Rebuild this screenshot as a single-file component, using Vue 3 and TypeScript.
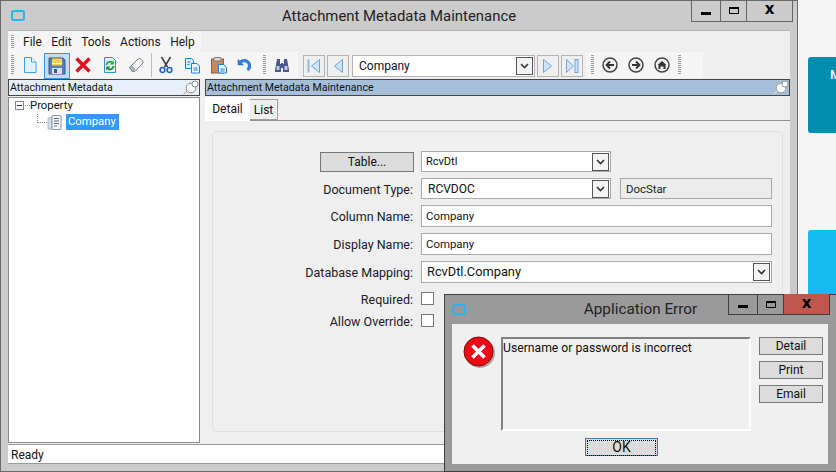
<script setup lang="ts">
const menus = ['File', 'Edit', 'Tools', 'Actions', 'Help']
</script>

<template>
  <div class="screen">
    <main class="window">
      <header class="titlebar">
        <span class="app-icon"></span>
        <span class="titlebar__text">Attachment Metadata Maintenance</span>
        <div class="caption">
          <button class="caption__btn caption__btn--min"><i></i></button>
          <button class="caption__btn caption__btn--max"><i></i></button>
          <button class="caption__btn caption__btn--close">x</button>
        </div>
      </header>

      <div class="client">
        <nav class="menu">
          <span class="grip grip--menu"></span>
          <span v-for="m in menus" :key="m" class="menu__item">{{ m }}</span>
        </nav>

        <div class="toolbar">
          <div class="strip strip--main">
            <span class="grip"></span>
            <span class="tool">
              <svg width="16" height="18" viewBox="0 0 16 18"><path d="M2.500 1.500h7l4.500 4.500v10.500h-11.500z" fill="#e3f2ff" stroke="#3f9fe8" /><path d="M9.500 1.500v4.500h4.500" fill="#fff" stroke="#3f9fe8" /></svg>
            </span>
            <span class="tool tool--active">
              <svg width="18" height="18" viewBox="0 0 18 18"><path d="M1 1h14l2 2v14h-16z" fill="#5a7fc0" stroke="#3a5590" /><rect x="4" y="1.500" width="10" height="7" fill="#f5cf55" /><rect x="4" y="6" width="10" height="1" fill="#fff" /><rect x="4" y="11" width="10" height="6" fill="#d9dfe8" /><rect x="6" y="12" width="3" height="4" fill="#3b5a94" /></svg>
            </span>
            <span class="tool">
              <svg width="18" height="18" viewBox="0 0 18 18"><path d="M2.500 2.500l13 13M15.500 2.500l-13 13" stroke="#e0101c" stroke-width="3.400" /></svg>
            </span>
            <span class="tool">
              <svg width="14" height="18" viewBox="0 0 14 18"><path d="M1.500 1.500h8l3 3v12h-11z" fill="#dff0fb" stroke="#2f8fd0" /><path d="M3.500 9a3.500 3.500 0 0 1 5.500-2.700" fill="none" stroke="#25a82e" stroke-width="1.800" /><path d="M10.800 4.500v4h-4z" fill="#25a82e" /><path d="M10.500 10a3.500 3.500 0 0 1-5.500 2.700" fill="none" stroke="#1c8c26" stroke-width="1.800" /><path d="M3.200 14.500v-4h4z" fill="#1c8c26" /></svg>
            </span>
            <span class="tool">
              <svg width="17" height="16" viewBox="0 0 17 16"><path d="M1.500 10.500l8.500-8.500a2 2 0 0 1 2.800 0l1.700 1.700a2 2 0 0 1 0 2.800l-7.500 7.800h-3z" fill="#f4f6f9" stroke="#777b83" /><path d="M1.500 10.500l3.300 3.800 2.200-2-3.300-3.800z" fill="#b4b9c2" stroke="#777b83" stroke-width=".6" /></svg>
            </span>
            <span class="sep"></span>
            <span class="tool">
              <svg width="14" height="18" viewBox="0 0 14 18"><path d="M2.500 1l6 10M11.500 1l-6 10" stroke="#3c3c3c" stroke-width="1.500" /><circle cx="3.500" cy="14" r="2.400" fill="none" stroke="#1f5fd0" stroke-width="1.500" /><circle cx="10.500" cy="14" r="2.400" fill="none" stroke="#1f5fd0" stroke-width="1.500" /></svg>
            </span>
            <span class="tool">
              <svg width="17" height="17" viewBox="0 0 17 17"><path d="M1.500 1.500h6l2 2v8h-8z" fill="#dcefff" stroke="#1c7fd6" /><path d="M7.500 6.500h5.500l2.500 2.500v7h-8z" fill="#eef7ff" stroke="#1c7fd6" /><path d="M3.500 5h3M3.500 7.500h2M9.500 11h4M9.500 13h4" stroke="#1c7fd6" /></svg>
            </span>
            <span class="tool">
              <svg width="18" height="18" viewBox="0 0 18 18"><rect x="1.500" y="3" width="12" height="14" fill="#c58a5c" stroke="#8e5f3d" /><rect x="4" y="1.500" width="7" height="3.500" rx="1" fill="#d9d9d9" stroke="#777" /><path d="M8.500 8.500h5l3 3v5.500h-8z" fill="#eef7ff" stroke="#1c7fd6" /><path d="M10.500 13h4M10.500 15h4" stroke="#1c7fd6" /></svg>
            </span>
            <span class="tool">
              <svg width="16" height="14" viewBox="0 0 16 14"><path d="M1 1.500v5.500h5.500l-2-2a4 4 0 0 1 6.500 1.300c.6 1.700 0 3.500-1.300 4.700l1.800 1.800a6.500 6.500 0 0 0 1.800-7.500 6.400 6.400 0 0 0-10.400-2.200z" fill="#2f7fd8" stroke="#1d5fb0" stroke-width=".5" /></svg>
            </span>
            <span class="grip grip--mid"></span>
            <span class="tool">
              <svg width="16" height="16" viewBox="0 0 16 16"><path d="M3 2h3v5h1v-1h2v1h1v-5h3l2 11v2h-6v-4h-2v4h-6v-2z" fill="#4a568f" /><rect x="2.500" y="9" width="3" height="4" fill="#c0c8e6" /><rect x="10.500" y="9" width="3" height="4" fill="#c0c8e6" /></svg>
            </span>
          </div>

          <div class="nav">
            <span class="nav__btn"><svg width="14" height="16" viewBox="0 0 14 16"><path d="M1.500 1.500v13" stroke="#8fb8e6" stroke-width="2" /><path d="M12.500 1.500v13l-8-6.500z" fill="#cfe4fa" stroke="#6fa5dd" /></svg></span>
            <span class="nav__btn"><svg width="12" height="16" viewBox="0 0 12 16"><path d="M10.500 1.500v13l-8-6.500z" fill="#cfe4fa" stroke="#6fa5dd" /></svg></span>
            <div class="nav__combo">
              <span>Company</span>
              <span class="combo-arrow"><svg width="9" height="6" viewBox="0 0 9 6"><path d="M1 1l3.500 3.500 3.500-3.500" fill="none" stroke="#333" stroke-width="1.600" /></svg></span>
            </div>
            <span class="nav__btn"><svg width="12" height="16" viewBox="0 0 12 16"><path d="M1.500 1.500v13l8-6.500z" fill="#cfe4fa" stroke="#6fa5dd" /></svg></span>
            <span class="nav__btn"><svg width="14" height="16" viewBox="0 0 14 16"><path d="M1.500 1.500v13l7-6.500z" fill="#cfe4fa" stroke="#6fa5dd" /><rect x="10" y="1.500" width="3" height="13" fill="#cfe4fa" stroke="#6fa5dd" /></svg></span>
          </div>

          <div class="strip strip--go">
            <span class="grip"></span>
            <span class="go">
              <svg width="16" height="16" viewBox="0 0 16 16"><circle cx="8" cy="8" r="7" fill="#f2f2f2" stroke="#444" stroke-width="1.500" /><path d="M12 8h-7M8 4.500l-3.500 3.500 3.500 3.500" fill="none" stroke="#333" stroke-width="1.800" /></svg>
            </span>
            <span class="go">
              <svg width="16" height="16" viewBox="0 0 16 16"><circle cx="8" cy="8" r="7" fill="#f2f2f2" stroke="#444" stroke-width="1.500" /><path d="M4 8h7M8 4.500l3.500 3.500-3.500 3.500" fill="none" stroke="#333" stroke-width="1.800" /></svg>
            </span>
            <span class="go">
              <svg width="16" height="16" viewBox="0 0 16 16"><circle cx="8" cy="8" r="7" fill="#f2f2f2" stroke="#444" stroke-width="1.500" /><path d="M3.500 8l4.500-4 4.500 4h-1v4h-2v-2.500h-3v2.500h-2v-4z" fill="#333" /></svg>
            </span>
            <span class="grip grip--end"></span>
          </div>
        </div>

        <div class="workspace">
          <aside class="left">
            <div class="dock dock--light">
              <span>Attachment Metadata</span>
              <svg class="pin" width="16" height="15" viewBox="0 0 16 15"><path d="M.5 14.500l4-4" stroke="#999" /><circle cx="8" cy="8" r="4.800" fill="#fff" stroke="#8a8a8a" /><circle cx="12" cy="4" r="3" fill="#fff" stroke="#8a8a8a" /></svg>
            </div>
            <div class="tree">
              <div class="tree__root">
                <span class="tree__box"></span>
                <span class="tree__dots"></span>
                <span>Property</span>
              </div>
              <div class="tree__child">
                <span class="tree__line"></span>
                <svg width="16" height="15" viewBox="0 0 16 15"><path d="M1 3.500l4-2v12.500h-4z" fill="#d2dde6" stroke="#9aa8b5" stroke-width=".8" /><rect x="5" y=".5" width="9" height="14" rx="1" fill="#f4f7fa" stroke="#8b98a5" /><path d="M7 3.500h5M7 6h5M7 8.500h5M7 11h3" stroke="#5d6b78" /></svg>
                <span class="tree__selected">Company</span>
              </div>
            </div>
          </aside>

          <section class="right">
            <div class="dock dock--blue">
              <span>Attachment Metadata Maintenance</span>
              <svg class="pin" width="16" height="15" viewBox="0 0 16 15"><path d="M.5 14.500l4-4" stroke="#e4e4e4" /><circle cx="8" cy="8" r="4.800" fill="#fff" stroke="#9a9a9a" /><circle cx="12" cy="4" r="3" fill="#fff" stroke="#9a9a9a" /></svg>
            </div>

            <div class="tabs">
              <span class="tab tab--active">Detail</span>
              <span class="tab">List</span>
            </div>

            <div class="group">
              <div class="form">
                <button class="btn btn--table">Table...</button>
                <div class="combo combo--short combo--narrow"><span>RcvDtl</span><span class="combo-arrow"><svg width="9" height="6" viewBox="0 0 9 6"><path d="M1 1l3.500 3.500 3.500-3.500" fill="none" stroke="#333" stroke-width="1.600" /></svg></span></div>

                <label>Document Type:</label>
                <div class="pair">
                  <div class="combo combo--short"><span class="combo__pad">RCVDOC</span><span class="combo-arrow"><svg width="9" height="6" viewBox="0 0 9 6"><path d="M1 1l3.500 3.500 3.500-3.500" fill="none" stroke="#333" stroke-width="1.600" /></svg></span></div>
                  <div class="field field--readonly">DocStar</div>
                </div>

                <label>Column Name:</label>
                <div class="field">Company</div>

                <label>Display Name:</label>
                <div class="field">Company</div>

                <label>Database Mapping:</label>
                <div class="combo combo--wide"><span>RcvDtl.Company</span><span class="combo-arrow"><svg width="9" height="6" viewBox="0 0 9 6"><path d="M1 1l3.500 3.500 3.500-3.500" fill="none" stroke="#333" stroke-width="1.600" /></svg></span></div>

                <label class="label--check">Required:</label>
                <span class="check"></span>

                <label class="label--check">Allow Override:</label>
                <span class="check"></span>
              </div>
            </div>
          </section>
        </div>

        <footer class="status">Ready</footer>
      </div>
    </main>

    <aside class="behind">
      <div class="tile tile--teal">M</div>
      <div class="tile tile--cyan"></div>
    </aside>

    <!-- modal sits over everything, bottom right -->
    <div class="dialog">
      <header class="dialog__bar">
        <span class="app-icon app-icon--dim"></span>
        <span class="dialog__title">Application Error</span>
        <div class="caption caption--dialog">
          <button class="caption__btn caption__btn--min"><i></i></button>
          <button class="caption__btn caption__btn--max"><i></i></button>
          <button class="caption__btn caption__btn--close caption__btn--red">x</button>
        </div>
      </header>
      <div class="dialog__body">
        <svg class="dialog__icon" width="33" height="33" viewBox="0 0 33 33">
          <circle cx="17" cy="17" r="15" fill="#a8a8a8" />
          <circle cx="15.500" cy="15.500" r="14.500" fill="#ee0a14" stroke="#7a0a0c" />
          <path d="M9.500 9.500l12 12M21.500 9.500l-12 12" stroke="#fff" stroke-width="3.600" />
        </svg>
        <div class="dialog__message">Username or password is incorrect</div>
        <div class="dialog__actions">
          <button class="btn btn--side">Detail</button>
          <button class="btn btn--side">Print</button>
          <button class="btn btn--side">Email</button>
        </div>
        <button class="btn btn--ok"><span>OK</span></button>
      </div>
    </div>
  </div>
</template>

<style>
html,
body {
  margin: 0;
  background: #f5f5f5;
}
</style>

<style scoped>
.screen {
  position: relative;
  display: flex;
  width: 836px;
  height: 472px;
  overflow: hidden;
  background: #f5f5f5;
  color: #111;
  font-family: Roboto, 'Open Sans', sans-serif;
  font-size: 12px;
}

.window {
  flex: none;
  display: flex;
  flex-direction: column;
  box-sizing: border-box;
  width: 798px;
  height: 472px;
  border: 1px solid #6a6a6a;
  background: #cbcbcb;
}

.titlebar {
  position: relative;
  flex: none;
  display: flex;
  align-items: center;
  justify-content: center;
  height: 29px;
}

.titlebar__text {
  font-size: 14.900px;
  color: #222;
  margin-top: 1px;
}

.app-icon {
  position: absolute;
  left: 10px;
  top: 9px;
  box-sizing: border-box;
  width: 14px;
  height: 11px;
  border: 2.500px solid #25b7ec;
  border-radius: 3px;
  background: #c9c9c9;
}

.app-icon--dim {
  left: 7px;
  top: 9px;
  background: #999;
}

.caption {
  position: absolute;
  top: -1px;
  right: 4px;
  display: flex;
  height: 22px;
  border: 1px solid #666;
  border-top: 0;
  box-sizing: border-box;
}

.caption__btn {
  display: flex;
  align-items: center;
  justify-content: center;
  padding: 0 0 2px;
  border: 0;
  border-left: 1px solid #666;
  background: transparent;
  color: #000;
  font: 700 15px/1 'DejaVu Sans', sans-serif;
}

.caption__btn--min {
  width: 28px;
  border-left: 0;
  padding: 5px 0 0;
}

.caption__btn--min i {
  display: block;
  width: 10px;
  height: 3px;
  background: #000;
}

.caption__btn--max {
  width: 26px;
  padding: 0;
}

.caption__btn--max i {
  display: block;
  box-sizing: border-box;
  width: 10px;
  height: 7px;
  border: 1.500px solid #000;
  border-top-width: 2px;
}

.caption__btn--close {
  width: 46px;
}

.caption__btn--red {
  background: #c0574f;
}

.client {
  flex: 1;
  min-height: 0;
  display: flex;
  flex-direction: column;
  margin: 0 7px 7px;
  border-top: 1px solid #b2b2b2;
  background: #efefef;
}

.menu {
  flex: none;
  display: flex;
  align-items: center;
  width: 193px;
  height: 21px;
  background: #f5f5f5;
}

.menu__item {
  margin-right: 9.500px;
  color: #1a1a1a;
}

.grip {
  flex: none;
  width: 3px;
  height: 20px;
  margin: 0 3px;
  background: repeating-linear-gradient(#9a9a9a 0 1px, transparent 1px 2px);
}

.grip--menu {
  height: 13px;
  margin-right: 9px;
}

.grip--mid {
  margin: 0 3px 0 4px;
}

.grip--end {
  margin-left: 16px;
}

.toolbar {
  flex: none;
  display: flex;
  height: 27px;
}

.strip {
  display: flex;
  align-items: center;
  height: 26px;
  background: #f5f5f5;
}

.strip--main {
  width: 290px;
}

.strip--go {
  width: 117px;
  margin-left: 3px;
  padding-left: 2px;
  box-sizing: border-box;
}

.tool {
  flex: none;
  display: flex;
  align-items: center;
  justify-content: center;
  box-sizing: border-box;
  width: 26.500px;
  height: 26px;
}

.tool--active {
  margin-top: 1px;
  border: 1px solid #3d95e0;
  background: #c3dcf3;
}

.sep {
  flex: none;
  width: 1px;
  height: 24px;
  margin: 0 1px;
  background: #bdbdbd;
}

.go {
  flex: none;
  display: flex;
  justify-content: center;
  width: 26px;
}

.strip--go .grip {
  margin: 0 3px;
}

.nav {
  display: flex;
  gap: 2px;
  margin-left: 5px;
  padding-top: 3px;
  height: 22px;
}

.nav__btn {
  display: flex;
  align-items: center;
  justify-content: center;
  box-sizing: border-box;
  width: 22px;
  height: 22px;
  border: 1px solid #b4b4b4;
}

.nav__combo {
  display: flex;
  align-items: center;
  justify-content: space-between;
  box-sizing: border-box;
  width: 183px;
  height: 22px;
  margin: 0 0 0 1px;
  padding: 0 1px 0 6px;
  border: 1px solid #b4b4b4;
  background: #fff;
}

.combo-arrow {
  display: flex;
  align-items: center;
  justify-content: center;
  box-sizing: border-box;
  width: 17px;
  height: 18px;
  border: 1px solid #555;
  background: #f4f4f4;
}

.workspace {
  flex: 1;
  min-height: 0;
  display: grid;
  grid-template-columns: 192px 1fr;
  gap: 5px;
}

.left,
.right {
  display: flex;
  flex-direction: column;
  min-height: 0;
}

.dock {
  position: relative;
  flex: none;
  box-sizing: border-box;
  height: 17px;
  padding-left: 1px;
  border: 1px solid #454545;
  font-size: 10.600px;
  line-height: 15px;
  white-space: nowrap;
}

.dock--light {
  background: #e7effb;
}

.dock--blue {
  background: #a6bfd9;
}

.pin {
  position: absolute;
  right: 0;
  top: 0;
}

.tree {
  flex: 1;
  margin-top: 1px;
  margin-bottom: 1px;
  padding: 0 0 0 6px;
  border: 1px solid #8a8a8a;
  background: #fff;
  font-size: 11.300px;
}

.tree__root {
  display: flex;
  align-items: center;
  height: 15px;
}

.tree__box {
  position: relative;
  box-sizing: border-box;
  width: 9px;
  height: 9px;
  border: 1px solid #8a8a8a;
  background: linear-gradient(#333, #333) center / 5px 1px no-repeat;
}

.tree__dots {
  width: 5px;
  margin: 0 0 0 1px;
  border-top: 1px dotted #888;
}

.tree__child {
  display: flex;
  align-items: center;
  height: 16px;
  margin-top: 1px;
  padding-left: 22px;
}

.tree__line {
  align-self: flex-start;
  width: 9px;
  height: 8px;
  border-left: 1px dotted #888;
  border-bottom: 1px dotted #888;
}

.tree__selected {
  margin-left: 3px;
  padding: 0 3px 0 2px;
  background: #3399ff;
  color: #fff;
  line-height: 16px;
}

.tabs {
  flex: none;
  display: flex;
  align-items: flex-end;
  box-sizing: border-box;
  height: 24px;
  margin-top: 1px;
  border-bottom: 1px solid #8f8f8f;
}

.tab {
  box-sizing: border-box;
  width: 28px;
  height: 21px;
  border: 1px solid #a0a0a0;
  border-left: 0;
  text-align: center;
  line-height: 20px;
}

.tab--active {
  position: relative;
  z-index: 1;
  width: 45px;
  height: 24px;
  margin-bottom: -1px;
  border: 0;
  background: #fff;
  line-height: 24px;
}

.group {
  flex: none;
  box-sizing: border-box;
  height: 301px;
  margin: 10px 7px 0;
  padding-top: 19px;
  border: 1px solid #d7e2ec;
  border-radius: 5px;
}

.form {
  display: grid;
  grid-template-columns: 200px 351px;
  column-gap: 8px;
  row-gap: 6px;
  align-items: center;
}

.form label {
  padding-top: 1px;
  font-size: 12.500px;
  text-align: right;
  color: #1a1a2a;
}

.form .label--check {
  margin: 4px 0 -1px;
  padding-top: 0;
  line-height: 13px;
}

.pair {
  display: flex;
  gap: 9px;
}

.field,
.combo {
  box-sizing: border-box;
  height: 22px;
  padding: 0 4px;
  border: 1px solid #a9a9a9;
  background: #fff;
  line-height: 20px;
}

.field {
  font-size: 11.400px;
}

.field--readonly {
  flex: 1;
  height: 21px;
  padding-left: 5px;
  background: #ececec;
  color: #222;
}

.combo {
  display: flex;
  align-items: center;
  justify-content: space-between;
  padding-right: 1px;
}

.combo--short {
  width: 190px;
  height: 21px;
}

.combo--narrow {
  font-size: 11px;
}

.combo--wide {
  padding-left: 5px;
  font-size: 12.800px;
}

.combo__pad {
  padding-left: 2px;
}

.btn {
  box-sizing: border-box;
  padding: 0;
  border: 1px solid #777;
  background: #dcdcdc;
  color: #111;
  font: inherit;
}

.btn--table {
  justify-self: end;
  width: 94px;
  height: 20px;
  margin-right: -1px;
  line-height: 16px;
}

.check {
  box-sizing: border-box;
  width: 13px;
  height: 13px;
  margin-top: 3px;
  border: 1px solid #777;
  background: #fff;
}

.status {
  flex: none;
  box-sizing: border-box;
  height: 20px;
  padding-left: 3px;
  border-top: 1px solid #9a9a9a;
  border-bottom: 1px solid #9a9a9a;
  background: #fff;
  line-height: 21px;
}

.behind {
  flex: 1;
  display: flex;
  flex-direction: column;
  gap: 97px;
  padding: 57px 0 0 10px;
}

.tile {
  box-sizing: border-box;
  width: 100px;
  height: 76px;
  border-radius: 3px;
  color: #fff;
  font-size: 13px;
  font-weight: 500;
  padding: 10px 0 0 22px;
}

.tile--teal {
  background: #008db0;
}

.tile--cyan {
  height: 110px;
  background: #13bdf0;
}

.dialog {
  position: absolute;
  left: 444px;
  top: 294px;
  box-sizing: border-box;
  width: 392px;
  height: 178px;
  border: 1px solid #3f3f3f;
  border-right: 0;
  border-bottom-width: 1px;
  background: #9a9a9a;
}

.dialog__bar {
  position: relative;
  display: flex;
  justify-content: center;
  height: 29px;
}

.dialog__title {
  margin-top: 5px;
  font-size: 15.300px;
  color: #222;
}

.caption--dialog {
  right: 6px;
  top: -1px;
  height: 21px;
  border-color: #3f3f3f;
}

.caption--dialog .caption__btn {
  border-color: #3f3f3f;
}

.dialog__body {
  display: grid;
  grid-template-columns: 49px 250px 1fr;
  grid-template-rows: 94px auto;
  row-gap: 7px;
  box-sizing: border-box;
  width: 376px;
  height: 140px;
  margin-left: 7px;
  padding-top: 13px;
  background: #f0f0f0;
}

.dialog__icon {
  margin: -1px 0 0 11px;
}

.dialog__message {
  box-sizing: border-box;
  padding: 2px 0;
  border: 2px solid;
  border-color: #808080 #fff #fff #808080;
  font-size: 12.200px;
  line-height: 15px;
}

.dialog__actions {
  display: flex;
  flex-direction: column;
  gap: 6px;
  padding-left: 8px;
}

.btn--side {
  width: 64px;
  height: 18px;
  line-height: 15px;
}

.btn--ok {
  grid-column: 2;
  justify-self: center;
  width: 73px;
  height: 18px;
  margin-right: 9px;
  padding: 1px;
  border-color: #3e7cab;
  font-size: 14px;
}

.btn--ok span {
  display: block;
  height: 14px;
  border: 1px dotted #000;
  line-height: 13px;
}
</style>
